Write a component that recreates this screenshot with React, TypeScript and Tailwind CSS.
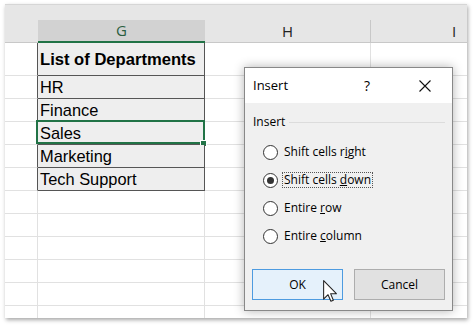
import React from 'react';

const rows = [
  { label: 'List of Departments', bold: true, table: true },
  { label: 'HR', table: true },
  { label: 'Finance', table: true },
  { label: 'Sales', table: true, selected: true },
  { label: 'Marketing', table: true },
  { label: 'Tech Support', table: true },
  { label: '' },
  { label: '' },
  { label: '' },
  { label: '' },
  { label: '' },
  { label: '' },
];

const options = [
  { before: 'Shift cells r', key: 'i', after: 'ght' },
  { before: 'Shift cells ', key: 'd', after: 'own', checked: true },
  { before: 'Entire ', key: 'r', after: 'ow' },
  { before: 'Entire ', key: 'c', after: 'olumn' },
];

const SheetRow: React.FC<{ label: string; bold?: boolean; table?: boolean; selected?: boolean }> = ({
  label,
  bold,
  table,
  selected,
}) => (
  <div className={`flex shrink-0 ${bold ? 'h-[33px]' : 'h-[23px]'}`}>
    <div
      className={`w-[33px] shrink-0 border-b border-r border-b-[#e1e1e1] ${
        table ? 'border-r-[#555555]' : 'border-r-[#e1e1e1]'
      }`}
    />
    <div
      className={`relative w-[167px] shrink-0 border-b border-r pl-[2px] flex text-black ${
        table ? 'bg-[#eeeeee] border-[#555555]' : 'border-[#e1e1e1]'
      } ${bold ? 'items-end pb-[2px] font-bold text-[16.6px]' : 'items-center text-[16.4px]'}`}
    >
      {label}
      {selected && (
        <>
          <div className="absolute -left-[2px] -top-[2px] -right-[1px] bottom-0 border-2 border-[#217346]" />
          <div className="absolute -right-[2px] -bottom-[2px] w-[5px] h-[5px] bg-[#217346] outline outline-1 outline-white" />
        </>
      )}
    </div>
    <div className="w-[166px] shrink-0 border-b border-r border-[#e1e1e1]" />
    <div className="w-[166px] shrink-0 border-b border-r border-[#e1e1e1]" />
  </div>
);

const App: React.FC = () => {
  return (
    <div className="w-[474px] h-[325px] bg-white pt-[4px] pl-[5px]">
      <div className="relative w-[462px] h-[314px] overflow-hidden bg-white shadow-[1px_2px_4px_rgba(0,0,0,0.35)] font-['Liberation_Sans',Arial,sans-serif]">
        {/* column headers */}
        <div className="h-[39px] bg-[#e6e6e6] border-t border-[#d6d6d6] flex flex-col">
          <div className="h-[15px] shrink-0" />
          <div className="flex h-[23px] font-['Open_Sans',sans-serif] text-[15px]">
            <div className="w-[33px] shrink-0 border-b border-[#c8c8c8]" />
            <div className="w-[167px] shrink-0 bg-[#d2d2d2] border-b-2 border-[#217346] flex items-center justify-center text-[#2a5e40]">
              G
            </div>
            <div className="w-[166px] shrink-0 border-b border-r border-[#c8c8c8] flex items-center justify-center text-[#222222]">
              H
            </div>
            <div className="w-[166px] shrink-0 border-b border-[#c8c8c8] flex items-center justify-center text-[#222222]">
              I
            </div>
          </div>
        </div>

        {/* cells */}
        <div className="flex flex-col">
          {rows.map((r, i) => (
            <SheetRow key={i} {...r} />
          ))}
        </div>

        {/* Insert dialog */}
        <div className="absolute left-[239px] top-[63px] w-[209px] h-[244px] border border-[#888888] bg-[#f0f0f0] shadow-[0_0_10px_rgba(0,0,0,0.3)] flex flex-col font-['Open_Sans',sans-serif] text-black">
          <div className="h-[35px] shrink-0 bg-white flex items-center">
            <span className="pl-[8px] text-[13px]">Insert</span>
            <span className="ml-auto w-[46px] text-center text-[14px]">?</span>
            <span className="ml-[12px] mr-[4px] w-[46px] flex justify-center">
              <svg width="12" height="12" viewBox="0 0 12 12">
                <path d="M0.5 0.5L11.5 11.5M11.5 0.5L0.5 11.5" stroke="#111" strokeWidth="1.1" />
              </svg>
            </span>
          </div>

          <div className="flex-1 flex flex-col px-[8px] pt-[10px] pb-[10px] pr-[7px]">
            <div className="h-[18px] flex items-center text-[12px]">
              <span>Insert</span>
              <div className="flex-1 h-px bg-[#dcdcdc] ml-[4px]" />
            </div>

            <div className="mt-[7px] flex flex-col pl-[10px] text-[12px]">
              {options.map((o, i) => (
                <div key={i} className="h-[28px] flex items-center">
                  <div className="w-[15px] h-[15px] rounded-full border-[1.5px] border-[#333333] bg-white flex items-center justify-center">
                    {o.checked && <div className="w-[7px] h-[7px] rounded-full bg-[#333333]" />}
                  </div>
                  <span
                    className={`ml-[4px] px-[1px] leading-[14px] border ${
                      o.checked ? 'border-dotted border-[#555555]' : 'border-transparent'
                    }`}
                  >
                    {o.before}
                    <span className="underline">{o.key}</span>
                    {o.after}
                  </span>
                </div>
              ))}
            </div>

            <div className="mt-auto flex gap-[11px] -ml-[1px] text-[12px]">
              <div className="w-[91px] h-[31px] border border-[#4d9be0] bg-[#e5f1fb] flex items-center justify-center">
                OK
              </div>
              <div className="w-[91px] h-[31px] border border-[#adadad] bg-[#e1e1e1] flex items-center justify-center">
                Cancel
              </div>
            </div>
          </div>
        </div>

        {/* mouse pointer */}
        <svg className="absolute left-[318px] top-[276px]" width="14" height="22" viewBox="0 0 12 19">
          <path
            d="M0.5 0.5L0.5 16.5L4.3 12.7L6.8 18.4L8.9 17.5L6.5 11.8L11.5 11.8Z"
            fill="white"
            stroke="#222"
            strokeWidth="0.9"
            strokeLinejoin="round"
          />
        </svg>
      </div>
    </div>
  );
};

export default App;
